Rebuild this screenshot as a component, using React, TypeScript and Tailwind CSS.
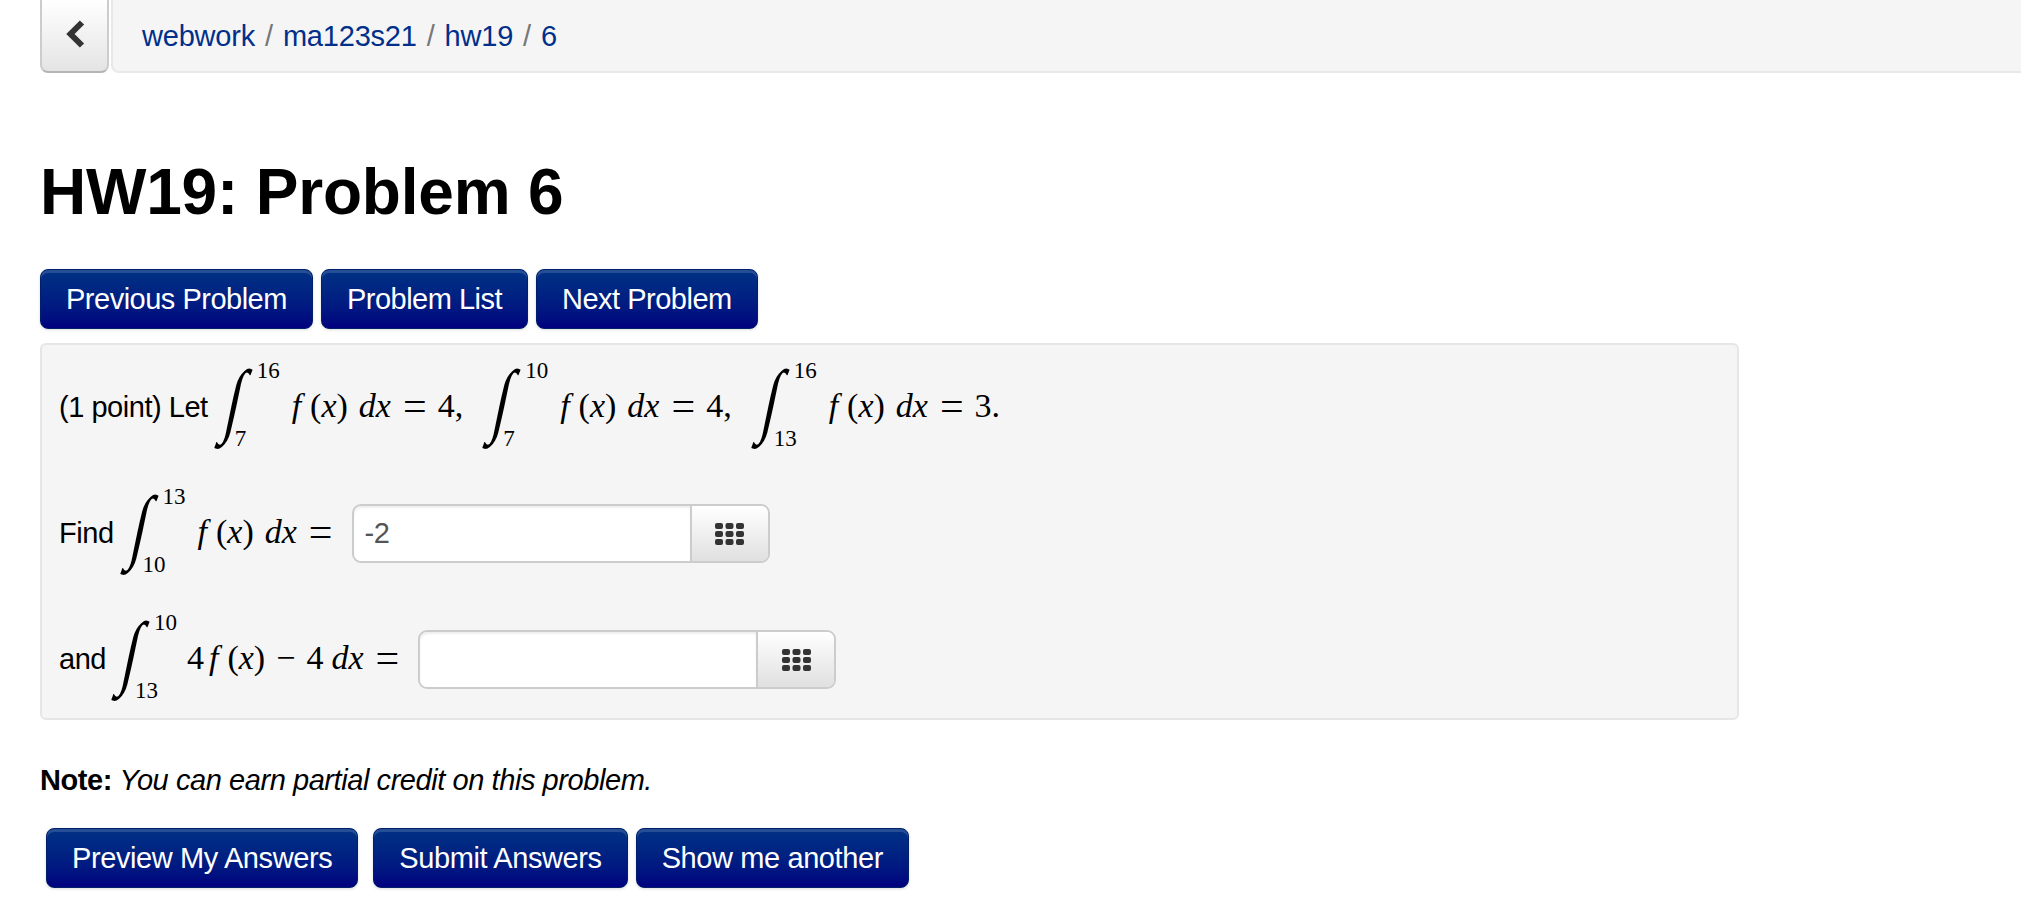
import React from "react";

const navButton =
  "h-[60px] rounded-[8px] border border-[#00206a] bg-gradient-to-b from-[#003184] to-[#00007f] px-[25px] text-[29px] leading-none text-white shadow-[inset_0_3px_0_rgba(255,255,255,0.15),0_1px_3px_rgba(0,0,0,0.15)]";

function GridIcon() {
  return (
    <svg width="29" height="22" viewBox="0 0 29 22" fill="#333">
      {[0, 8, 16].map((y) =>
        [0, 10.5, 21].map((x) => <rect key={`${x}-${y}`} x={x} y={y} width="8" height="6" rx="2" />)
      )}
    </svg>
  );
}

function Integral({ sup, sub, width, subLeft }: { sup: string; sub: string; width: number; subLeft: number }) {
  return (
    <span className="relative inline-block h-[100px] shrink-0" style={{ width }}>
      <span className="absolute left-[7px] top-[-8px] font-['Liberation_Serif',serif] text-[82px] leading-[100px] [transform:skewX(-12deg)_scaleX(0.7)]">
        ∫
      </span>
      <span className="absolute left-[40px] top-[0px] text-[23px] leading-[26px]">{sup}</span>
      <span className="absolute top-[68px] text-[23px] leading-[26px]" style={{ left: subLeft }}>
        {sub}
      </span>
    </span>
  );
}

function Eq() {
  return <span className="ml-[12px] mr-[11px] pb-[4px] text-[42px] leading-none">=</span>;
}

function Fx() {
  return (
    <span className="whitespace-pre pb-[4px]">
      <i>f</i>
      <span className="ml-[9px]">
        (<i>x</i>)
      </span>
      <i className="ml-[11px]">dx</i>
    </span>
  );
}

function AnswerBox({ value, className }: { value?: string; className: string }) {
  return (
    <span className={`${className} flex h-[59px] w-[418px] shrink-0 rounded-[9px] border-2 border-[#ccc] bg-white font-['Liberation_Sans',sans-serif]`}>
      <input
        readOnly
        value={value ?? ""}
        className="w-[336px] rounded-l-[8px] bg-white px-[11px] text-[29px] text-[#555] shadow-[inset_0_2px_2px_rgba(0,0,0,0.07)] outline-none"
      />
      <span className="flex flex-1 items-center justify-center rounded-r-[7px] border-l-2 border-[#ccc] bg-gradient-to-b from-white to-[#e0e0e0]">
        <GridIcon />
      </span>
    </span>
  );
}

export default function App() {
  return (
    <div className="h-[909px] overflow-hidden bg-white font-['Liberation_Sans',sans-serif] text-black">
      <div className="ml-10 flex h-[73px] gap-[2px]">
        <button className="flex w-[69px] items-center justify-center rounded-b-[8px] border-2 border-t-0 border-[#ccc] border-b-[#b5b5b5] bg-gradient-to-b from-white to-[#e4e4e4] pb-[3px]">
          <svg width="20" height="28" viewBox="0 0 20 28" fill="none" stroke="#333" strokeWidth="6">
            <path d="M17 2.5 5.5 14 17 25.5" />
          </svg>
        </button>
        <nav className="flex flex-1 items-center rounded-bl-[8px] border-b-2 border-l-2 border-[#e8e8e8] bg-[#f5f5f5] pl-[29px] pt-[2px] text-[29px] tracking-[-0.2px] text-[#00308a]">
          <span>webwork</span>
          <span className="px-[10px] text-[#777]">/</span>
          <span>ma123s21</span>
          <span className="px-[10px] text-[#777]">/</span>
          <span>hw19</span>
          <span className="px-[10px] text-[#777]">/</span>
          <span>6</span>
        </nav>
      </div>

      <h1 className="ml-10 mt-[84px] text-[64px] font-bold leading-[70px] tracking-[-0.2px]">HW19: Problem 6</h1>

      <div className="ml-10 mt-[42px] flex gap-2 tracking-[-0.5px]">
        <button className={navButton}>Previous Problem</button>
        <button className={navButton}>Problem List</button>
        <button className={navButton}>Next Problem</button>
      </div>

      <div className="ml-10 mt-[14px] h-[377px] w-[1699px] rounded-[6px] border-2 border-[#e6e6e6] bg-[#f5f5f5] pl-[17px] text-[29px] tracking-[-0.47px]">
        <div className="flex h-[125px] items-center">
          <span className="mr-[9px]">(1 point) Let</span>
          <span className="flex items-center whitespace-pre font-['Liberation_Serif',serif] text-[34px] tracking-normal">
            <Integral sup="16" sub="7" width={75} subLeft={18} />
            <Fx />
            <Eq />
            <span className="pb-[4px]">4,</span>
            <span className="w-[22px]" />
            <Integral sup="10" sub="7" width={75} subLeft={18} />
            <Fx />
            <Eq />
            <span className="pb-[4px]">4,</span>
            <span className="w-[22px]" />
            <Integral sup="16" sub="13" width={75} subLeft={20} />
            <Fx />
            <Eq />
            <span className="pb-[4px]">3.</span>
          </span>
        </div>
        <div className="flex h-[127px] items-center">
          <span className="mr-[9px]">Find</span>
          <span className="flex items-center whitespace-pre font-['Liberation_Serif',serif] text-[34px] tracking-normal">
            <Integral sup="13" sub="10" width={75} subLeft={20} />
            <Fx />
            <Eq />
          </span>
          <AnswerBox value="-2" className="ml-[8px]" />
        </div>
        <div className="flex h-[125px] items-center">
          <span className="mr-[8px]">and</span>
          <span className="flex items-center whitespace-pre font-['Liberation_Serif',serif] text-[34px] tracking-normal">
            <Integral sup="10" sub="13" width={73} subLeft={21} />
            <span className="whitespace-pre pb-[4px]">
              4<i className="ml-[5px]">f</i>
              <span className="ml-[9px]">
                (<i>x</i>)
              </span>
              <span className="mx-[11px]">−</span>4<i className="ml-[8px]">dx</i>
            </span>
            <Eq />
          </span>
          <AnswerBox className="ml-[8px]" />
        </div>
      </div>

      <p className="ml-10 mt-[42px] text-[29px] leading-[36px] tracking-[-0.43px]">
        <b>Note:</b> <i>You can earn partial credit on this problem.</i>
      </p>

      <div className="ml-[46px] mt-[30px] flex gap-2 tracking-[-0.4px]">
        <button className={navButton}>Preview My Answers</button>
        <button className={`${navButton} ml-[7px]`}>Submit Answers</button>
        <button className={navButton}>Show me another</button>
      </div>
    </div>
  );
}
